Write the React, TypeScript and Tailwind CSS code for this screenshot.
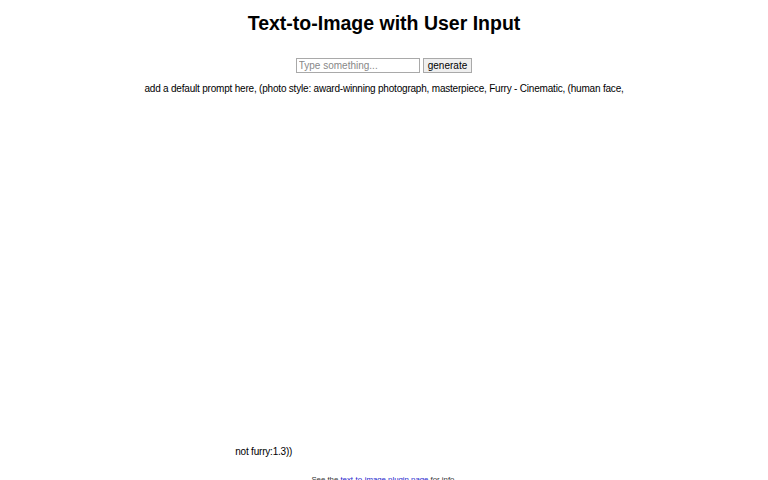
import React, { useState } from 'react';

const DEFAULT_PROMPT =
  'add a default prompt here, (photo style: award-winning photograph, masterpiece, Furry - Cinematic, (human face, not furry:1.3))';

const App: React.FC = () => {
  const [text, setText] = useState('');

  return (
    <div className="min-h-screen bg-white text-black text-center font-['Liberation_Sans',Arial,sans-serif]">
      <h1 className="pt-[11px] text-[19.5px] font-bold leading-[24px]">Text-to-Image with User Input</h1>

      <div className="mt-[23px] flex items-center justify-center gap-[3px]">
        <input
          value={text}
          onChange={(e) => setText(e.target.value)}
          placeholder="Type something..."
          className="w-[124px] h-[15px] border border-[#a9a9a9] px-[2px] text-[10px] placeholder:text-[#888]"
        />
        <button className="h-[15px] px-[4px] border border-[#a9a9a9] bg-[#efefef] text-[10px] leading-none">
          generate
        </button>
      </div>

      {/* prompt text with the output image slot inline after it */}
      <p className="mx-auto mt-[10px] w-[484px] text-[10px] leading-[12px] tracking-[-0.2px]">
        {DEFAULT_PROMPT}{' '}
        <span className="inline-block w-[238px] h-[360px] align-baseline" />
      </p>

      <p className="mt-[16px] text-[7.8px] text-[#333]">
        See the <a className="text-[#2222cc]" href="#">text-to-image plugin page</a> for info.
      </p>
    </div>
  );
};

export default App;
